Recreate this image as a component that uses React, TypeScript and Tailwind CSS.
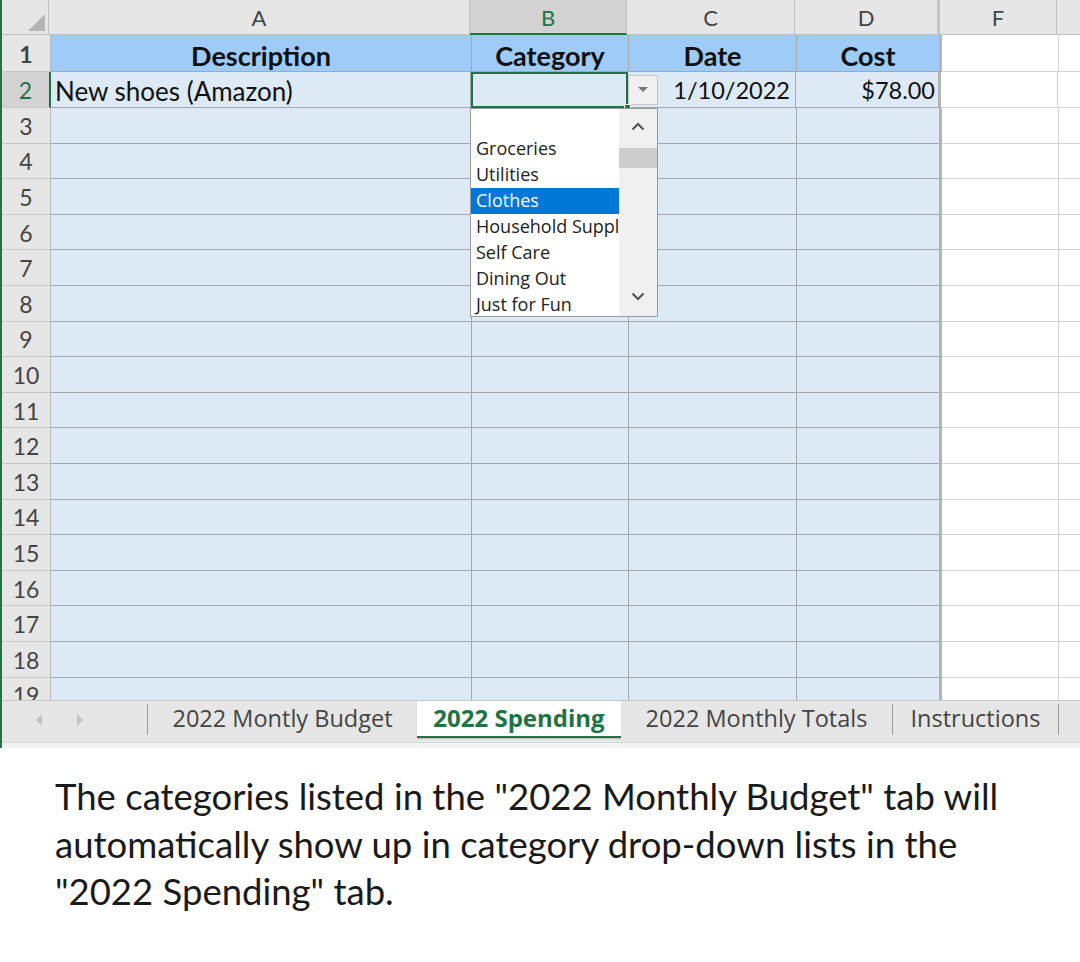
import React from "react";

function RowHeader({ n, h, active }: { n: number; h: string; active?: boolean }) {
  return (
    <div
      className={`w-[49px] shrink-0 flex items-center justify-center border-b border-b-[#c8c8c8] ${
        active ? "bg-[#d2d2d2] text-[#217346] border-r-2 border-r-[#217346]" : "bg-[#e6e6e6] text-[#444] border-r border-r-[#b8b8b8]"
      } ${h} text-[23px] leading-none pt-[2px]`}
    >
      {n}
    </div>
  );
}

function DataRow({ n }: { n: number }) {
  return (
    <div className="flex h-[35.6px] shrink-0">
      <RowHeader n={n} h="h-[35.6px]" />
      <div className="w-[421px] shrink-0 bg-[#ddeaf6] border-r border-b border-[#a3a8ae]" />
      <div className="w-[157px] shrink-0 bg-[#ddeaf6] border-r border-b border-[#a3a8ae]" />
      <div className="w-[168px] shrink-0 bg-[#ddeaf6] border-r border-b border-[#a3a8ae]" />
      <div className="w-[145px] shrink-0 bg-[#ddeaf6] border-r-[3px] border-r-[#b4b4b4] border-b border-b-[#a3a8ae]" />
      <div className="w-[117px] shrink-0 bg-white border-r border-b border-[#d4d4d4]" />
      <div className="flex-1 bg-white border-b border-[#d4d4d4]" />
    </div>
  );
}

function ChevronUp() {
  return (
    <svg width="14" height="9" viewBox="0 0 14 9">
      <path d="M1.5 7.5 L7 2 L12.5 7.5" fill="none" stroke="#505050" strokeWidth="2" />
    </svg>
  );
}
function ChevronDown() {
  return (
    <svg width="14" height="9" viewBox="0 0 14 9">
      <path d="M1.5 1.5 L7 7 L12.5 1.5" fill="none" stroke="#505050" strokeWidth="2" />
    </svg>
  );
}

export default function App() {
  const items = ["Groceries", "Utilities", "Clothes", "Household Supplies", "Self Care", "Dining Out", "Just for Fun"];
  const rows = Array.from({ length: 17 }, (_, i) => i + 3);
  return (
    <div className="w-[1080px] h-[962px] bg-white overflow-hidden" style={{ fontFamily: "Lato, 'Open Sans', sans-serif" }}>
      <div className="h-[748px] flex flex-col border-l-2 border-l-[#217346]">
        {/* grid */}
        <div className="relative h-[700px] overflow-hidden flex flex-col">
          {/* column headers */}
          <div className="flex h-[35px] shrink-0 text-[22px] text-[#444] leading-none">
            <div className="w-[47px] shrink-0 bg-[#e6e6e6] border-r border-b border-[#c0c0c0] relative">
              <div className="absolute right-[3px] bottom-[3px] w-0 h-0 border-l-[17px] border-l-transparent border-b-[17px] border-b-[#b4b4b4]" />
            </div>
            <div className="w-[421px] shrink-0 bg-[#e6e6e6] border-r border-b border-[#c0c0c0] flex items-center justify-center pt-[2px]">A</div>
            <div className="w-[157px] shrink-0 bg-[#d2d2d2] border-r border-r-[#c0c0c0] border-b-2 border-b-[#217346] flex items-center justify-center pt-[3px] text-[#217346]">B</div>
            <div className="w-[168px] shrink-0 bg-[#e6e6e6] border-r border-b border-[#c0c0c0] flex items-center justify-center pt-[2px]">C</div>
            <div className="w-[145px] shrink-0 bg-[#e6e6e6] border-r-[3px] border-r-[#c4c4c4] border-b border-b-[#c0c0c0] flex items-center justify-center pt-[2px]">D</div>
            <div className="w-[117px] shrink-0 bg-[#e6e6e6] border-r border-b border-[#c0c0c0] flex items-center justify-center pt-[2px]">F</div>
            <div className="flex-1 bg-[#e6e6e6] border-b border-[#c0c0c0]" />
          </div>
          {/* row 1 */}
          <div className="flex h-[37px] shrink-0 text-[27px] font-bold text-[#111] leading-none">
            <RowHeader n={1} h="h-[37px]" />
            <div className="w-[421px] shrink-0 bg-[#9ecbf7] border-r border-b border-[#a3a8ae] flex items-center justify-center pt-[5px]">Description</div>
            <div className="w-[157px] shrink-0 bg-[#9ecbf7] border-r border-b border-[#a3a8ae] flex items-center justify-center pt-[5px]">Category</div>
            <div className="w-[168px] shrink-0 bg-[#9ecbf7] border-r border-b border-[#a3a8ae] flex items-center justify-center pt-[5px]">Date</div>
            <div className="w-[145px] shrink-0 bg-[#9ecbf7] border-r-[3px] border-r-[#b4b4b4] border-b border-b-[#a3a8ae] flex items-center justify-center pt-[5px]">Cost</div>
            <div className="w-[117px] shrink-0 bg-white border-r border-b border-[#d4d4d4]" />
            <div className="flex-1 bg-white border-b border-[#d4d4d4]" />
          </div>
          {/* row 2 */}
          <div className="flex h-[36px] shrink-0 text-[26px] text-[#111] leading-none">
            <RowHeader n={2} h="h-[36px]" active />
            <div className="w-[420px] shrink-0 bg-[#ddeaf6] border-r border-b border-[#a3a8ae] flex items-center pl-[4px] pt-[3px]">New shoes (Amazon)</div>
            <div className="w-[157px] shrink-0 bg-[#ddeaf6] border-2 border-[#217346] relative">
              <div className="absolute right-[-5px] bottom-[-5px] w-[7px] h-[7px] bg-[#217346] border border-white" />
            </div>
            <div className="w-[168px] shrink-0 bg-[#ddeaf6] border-r border-b border-[#a3a8ae] flex items-center justify-between pr-[5px] text-[23.5px]">
              <div className="w-[30px] h-[30px] ml-0 bg-[#f0f0f0] border border-[#c6c6c6] flex items-center justify-center">
                <div className="w-0 h-0 border-l-[5px] border-r-[5px] border-t-[5px] border-l-transparent border-r-transparent border-t-[#777]" />
              </div>
              <span className="pt-[3px]">1/10/2022</span>
            </div>
            <div className="w-[145px] shrink-0 bg-[#ddeaf6] border-r-[3px] border-r-[#b4b4b4] border-b border-b-[#a3a8ae] flex items-center justify-end pr-[3px] pt-[3px] text-[23.5px]">$78.00</div>
            <div className="w-[117px] shrink-0 bg-white border-r border-b border-[#d4d4d4]" />
            <div className="flex-1 bg-white border-b border-[#d4d4d4]" />
          </div>
          {rows.map((n) => (
            <DataRow key={n} n={n} />
          ))}

          {/* dropdown */}
          <div
            className="absolute left-[468px] top-[108px] w-[188px] h-[209px] bg-white border border-[#9a9a9a] flex overflow-hidden"
            style={{ fontFamily: "'Open Sans', 'Noto Sans', sans-serif" }}
          >
            <div className="w-[148px] shrink-0 pt-[27px] text-[18px] text-[#222] leading-[25px] overflow-hidden">
              {items.map((it) => (
                <div
                  key={it}
                  className={`h-[26px] pl-[5px] whitespace-nowrap overflow-hidden ${it === "Clothes" ? "bg-[#0078d7] text-white" : ""}`}
                >
                  {it}
                </div>
              ))}
            </div>
            <div className="flex-1 bg-[#f0f0f0] relative">
              <div className="absolute left-0 right-0 top-[13px] flex justify-center">
                <ChevronUp />
              </div>
              <div className="absolute left-0 right-0 top-[39px] h-[20px] bg-[#cdcdcd]" />
              <div className="absolute left-0 right-0 top-[183px] flex justify-center">
                <ChevronDown />
              </div>
            </div>
          </div>
        </div>

        {/* tab bar */}
        <div
          className="h-[42px] shrink-0 bg-[#e6e6e6] border-t border-[#c8c8c8] flex items-center text-[23.5px] text-[#444] leading-none"
          style={{ fontFamily: "'Open Sans', 'Noto Sans', sans-serif" }}
        >
          <div className="w-[145px] shrink-0 flex items-center h-full pb-[4px]">
            <div className="ml-[34px] w-0 h-0 border-t-[6px] border-b-[6px] border-r-[6px] border-t-transparent border-b-transparent border-r-[#c2c2c2]" />
            <div className="ml-[35px] w-0 h-0 border-t-[6px] border-b-[6px] border-l-[6px] border-t-transparent border-b-transparent border-l-[#c2c2c2]" />
          </div>
          <div className="w-px h-[31px] bg-[#9a9a9a] shrink-0 mb-[4px]" />
          <div className="w-[269px] shrink-0 flex items-center justify-center h-full pb-[6px]">2022 Montly Budget</div>
          <div className="w-[204px] shrink-0 h-[37px] self-start bg-white border-b-2 border-[#217346] flex items-center justify-center font-bold text-[24px] text-[#217346] pb-[2px] shadow-[0_1px_1px_rgba(0,0,0,0.15)]">
            2022 Spending
          </div>
          <div className="w-[271px] shrink-0 flex items-center justify-center h-full pb-[6px]">2022 Monthly Totals</div>
          <div className="w-px h-[31px] bg-[#9a9a9a] shrink-0 mb-[4px]" />
          <div className="w-[165px] shrink-0 flex items-center justify-center h-full pb-[6px]">Instructions</div>
          <div className="w-px h-[31px] bg-[#9a9a9a] shrink-0 mb-[4px]" />
        </div>
        <div className="h-[6px] bg-[#f2f2f2] border-t border-[#d8d8d8]" />
      </div>

      {/* caption */}
      <div className="pl-[55px] pt-[25px] text-[36.5px] leading-[47.5px] text-[#1a1a1a]" style={{ fontFamily: "Lato, 'Open Sans', sans-serif" }}>
        <div>The categories listed in the "2022 Monthly Budget" tab will</div>
        <div>automatically show up in category drop-down lists in the</div>
        <div>"2022 Spending" tab.</div>
      </div>
    </div>
  );
}
